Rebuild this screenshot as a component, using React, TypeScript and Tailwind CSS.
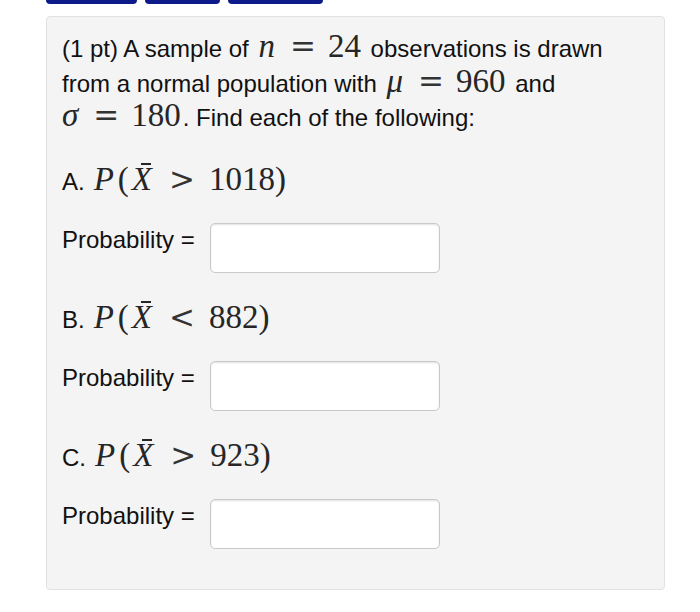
import React from "react";

const M = ({ children, className = "" }: { children: React.ReactNode; className?: string }) => (
  <span className={`font-['Liberation_Serif',serif] text-[33px] leading-[0px] text-[#262626] ${className}`}>
    {children}
  </span>
);

const Rel = ({ children, l = 15, r = 12 }: { children: React.ReactNode; l?: number; r?: number }) => (
  <span
    className="font-['DejaVu_Serif',serif] text-[31px] leading-[0px] text-[#333]"
    style={{ marginLeft: l, marginRight: r }}
  >
    {children}
  </span>
);

const XBar = () => (
  <span className="relative inline-block italic ml-[3px] leading-[0px]">
    X
    <span className="absolute left-[9px] top-[-16px] w-[10px] h-[1.5px] bg-[#262626]" />
  </span>
);

const Part = ({ letter, rel, num }: { letter: string; rel: string; num: string }) => (
  <div className="flex flex-col">
    <div className="h-[40px] leading-[40px] whitespace-nowrap">
      <span className="mr-[9px]">{letter}.</span>
      <M>
        <span className="italic mr-[2px]">P</span>
        <span className="ml-[2px]">(</span>
        <XBar />
        <Rel l={17} r={14}>
          {rel}
        </Rel>
        {num})
      </M>
    </div>
    <div className="mt-[21px] flex items-start">
      <span className="mt-[5px] leading-[24px] mr-[15px]">Probability =</span>
      <div className="w-[230px] h-[50px] bg-white border border-[#c9c9c9] rounded-[5px] shadow-[inset_0_1px_2px_rgba(0,0,0,0.12)]" />
    </div>
  </div>
);

export default function App() {
  return (
    <div className="w-[700px] h-[612px] bg-white font-['Liberation_Sans',Arial,sans-serif] text-[24px] text-[#111]">
      <div className="flex gap-[8px] ml-[46px] h-[4px]">
        <div className="w-[91px] h-[4px] bg-[#0c1a8a] rounded-b-[4px]" />
        <div className="w-[75px] h-[4px] bg-[#0c1a8a] rounded-b-[4px]" />
        <div className="w-[95px] h-[4px] bg-[#0c1a8a] rounded-b-[4px]" />
      </div>
      <div className="mt-[12px] ml-[46px] w-[619px] h-[574px] bg-[#f4f4f4] border border-[#e2e2e2] rounded-[4px] pl-[15px] pt-[15px]">
        <div className="leading-[34.5px]">
          <div className="h-[34.5px] whitespace-nowrap">
            (1 pt) A sample of{" "}
            <M className="ml-[3px] mr-[3px]">
              <span className="italic">n</span>
              <Rel>=</Rel>24
            </M>{" "}
            observations is drawn
          </div>
          <div className="h-[34.5px] whitespace-nowrap">
            from a normal population with{" "}
            <M className="ml-[3px] mr-[3px]">
              <span className="italic">μ</span>
              <Rel>=</Rel>960
            </M>{" "}
            and
          </div>
          <div className="h-[34.5px] whitespace-nowrap">
            <M className="mr-[2px]">
              <span className="italic">σ</span>
              <Rel>=</Rel>180
            </M>
            . Find each of the following:
          </div>
        </div>
        <div className="mt-[26.5px] flex flex-col gap-[27px]">
          <Part letter="A" rel=">" num="1018" />
          <Part letter="B" rel="<" num="882" />
          <Part letter="C" rel=">" num="923" />
        </div>
      </div>
    </div>
  );
}
